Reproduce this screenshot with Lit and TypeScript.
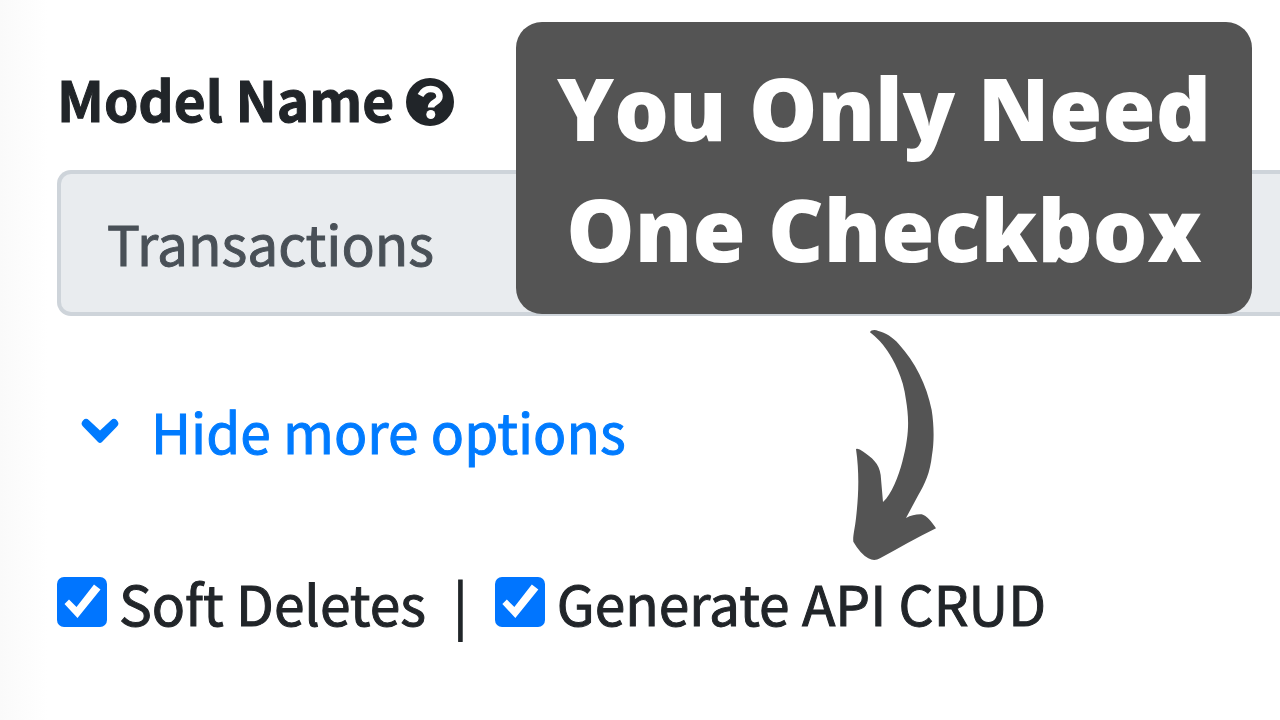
import { LitElement, html, css } from "lit";
import { customElement, property } from "lit/decorators.js";

@customElement("check-option")
export class CheckOption extends LitElement {
  @property() label = "";

  static styles = css`
    :host {
      display: block;
    }
    .option {
      display: flex;
      align-items: center;
      gap: 12px;
    }
    .box {
      appearance: none;
      flex: none;
      display: grid;
      width: 50px;
      height: 50px;
      margin: 0;
      border-radius: 7px;
      border: 2px solid #adb5bd;
      background: #fff;
    }
    .box:checked {
      border: 0;
      background: #0075ff;
    }
    .box:checked::before {
      content: "";
      background: #fff;
      clip-path: polygon(15% 54%, 24% 45%, 39% 60%, 74% 15%, 87% 25%, 41% 82%);
    }
  `;

  render() {
    return html`
      <label class="option">
        <input class="box" type="checkbox" checked />
        <span>${this.label}</span>
      </label>
    `;
  }
}

@customElement("app-root")
export class AppRoot extends LitElement {
  static styles = css`
    :host {
      display: block;
      position: relative;
      box-sizing: border-box;
      min-height: 100vh;
      overflow: hidden;
      padding: 58px 0 40px 57px;
      background: linear-gradient(to right, #fafafa, #fff 48px);
      color: #212529;
      font-family: "Noto Sans CJK SC", "Noto Sans", sans-serif;
      font-size: 55px;
      line-height: 80px;
    }
    main {
      -webkit-text-stroke: 1px currentColor;
    }
    .caption {
      display: flex;
      align-items: center;
      gap: 12px;
      font-weight: 700;
    }
    .help {
      display: flex;
      padding: 8px 0 0;
      border: 0;
      background: none;
      color: inherit;
    }
    .name {
      display: block;
      box-sizing: border-box;
      width: 100%;
      height: 146px;
      margin: 32px 0 0;
      padding: 0 46px 2px;
      border: 4px solid #ced4da;
      border-right: 0;
      border-radius: 14px 0 0 14px;
      background: #e9ecef;
      color: #495057;
      font: inherit;
    }
    .toggle {
      display: flex;
      align-items: center;
      width: fit-content;
      gap: 31px;
      margin: 74px 0 0 23px;
      color: #007bff;
      text-decoration: none;
    }
    .options {
      display: flex;
      align-items: center;
      margin-top: 92px;
      gap: 27px;
    }
    .callout {
      position: absolute;
      top: 22px;
      right: 28px;
      display: flex;
      flex-direction: column;
      align-items: center;
      gap: 11px;
    }
    .headline {
      margin: 0;
      padding: 25px 41px;
      border-radius: 26px;
      background: #545454;
      color: #fff;
      font: 800 86px/121px "Open Sans", sans-serif;
      text-align: center;
    }
    .arrow {
      padding-left: 22px;
    }
  `;

  render() {
    return html`
      <main>
        <div class="caption">
          <label for="name">Model Name</label>
          <button class="help" type="button" aria-label="Help">
            <svg width="48" height="48" viewBox="0 0 48 48" aria-hidden="true">
              <circle cx="24" cy="24" r="24" fill="currentColor" />
              <path
                d="M14.500 17.500C17 13 20 11 24.500 11C30 11 33.500 14 33.500 18.500C33.500 24.500 25 24 25 29.500"
                fill="none"
                stroke="#fff"
                stroke-width="6.500"
              />
              <circle cx="24.800" cy="36.500" r="4.500" fill="#fff" />
            </svg>
          </button>
        </div>
        <input class="name" id="name" type="text" value="Transactions" readonly />
        <a class="toggle" href="#options">
          <svg width="40" height="28" viewBox="0 0 40 28" aria-hidden="true">
            <path
              d="M3.200 4.200Q6 1.500 9 4.200L20 14.500L31 4.200Q34 1.500 36.800 4.200Q40 7.500 37 10.500L22 26Q20 28 18 26L3 10.500Q0 7.500 3.200 4.200Z"
              fill="currentColor"
            />
          </svg>
          <span>Hide more options</span>
        </a>
        <div class="options" id="options">
          <check-option label="Soft Deletes"></check-option>
          <span>|</span>
          <check-option label="Generate API CRUD"></check-option>
        </div>
      </main>
      <aside class="callout">
        <h1 class="headline">You Only Need<br />One Checkbox</h1>
        <svg class="arrow" width="90" height="240" viewBox="60 45 270 720" aria-hidden="true">
          <path
            fill="#545454"
            d="M120 67C122 60 135 58 145 63C165 68 190 82 206 102C255 155 290 225 305 300C312 345 313 395 306 435C300 490 285 520 265 555L228 624Q250 612 275 613C290 617 305 635 318 655C260 683 205 715 150 745Q133 755 115 745Q90 730 70 695C68 680 74 660 78 625C84 570 90 500 78 417Q85 414 100 425C125 442 148 460 152 495L159 576C185 552 205 500 217 455C240 370 236 320 228 270C220 200 190 150 172 122Q150 90 120 67Z"
          />
        </svg>
      </aside>
    `;
  }
}
